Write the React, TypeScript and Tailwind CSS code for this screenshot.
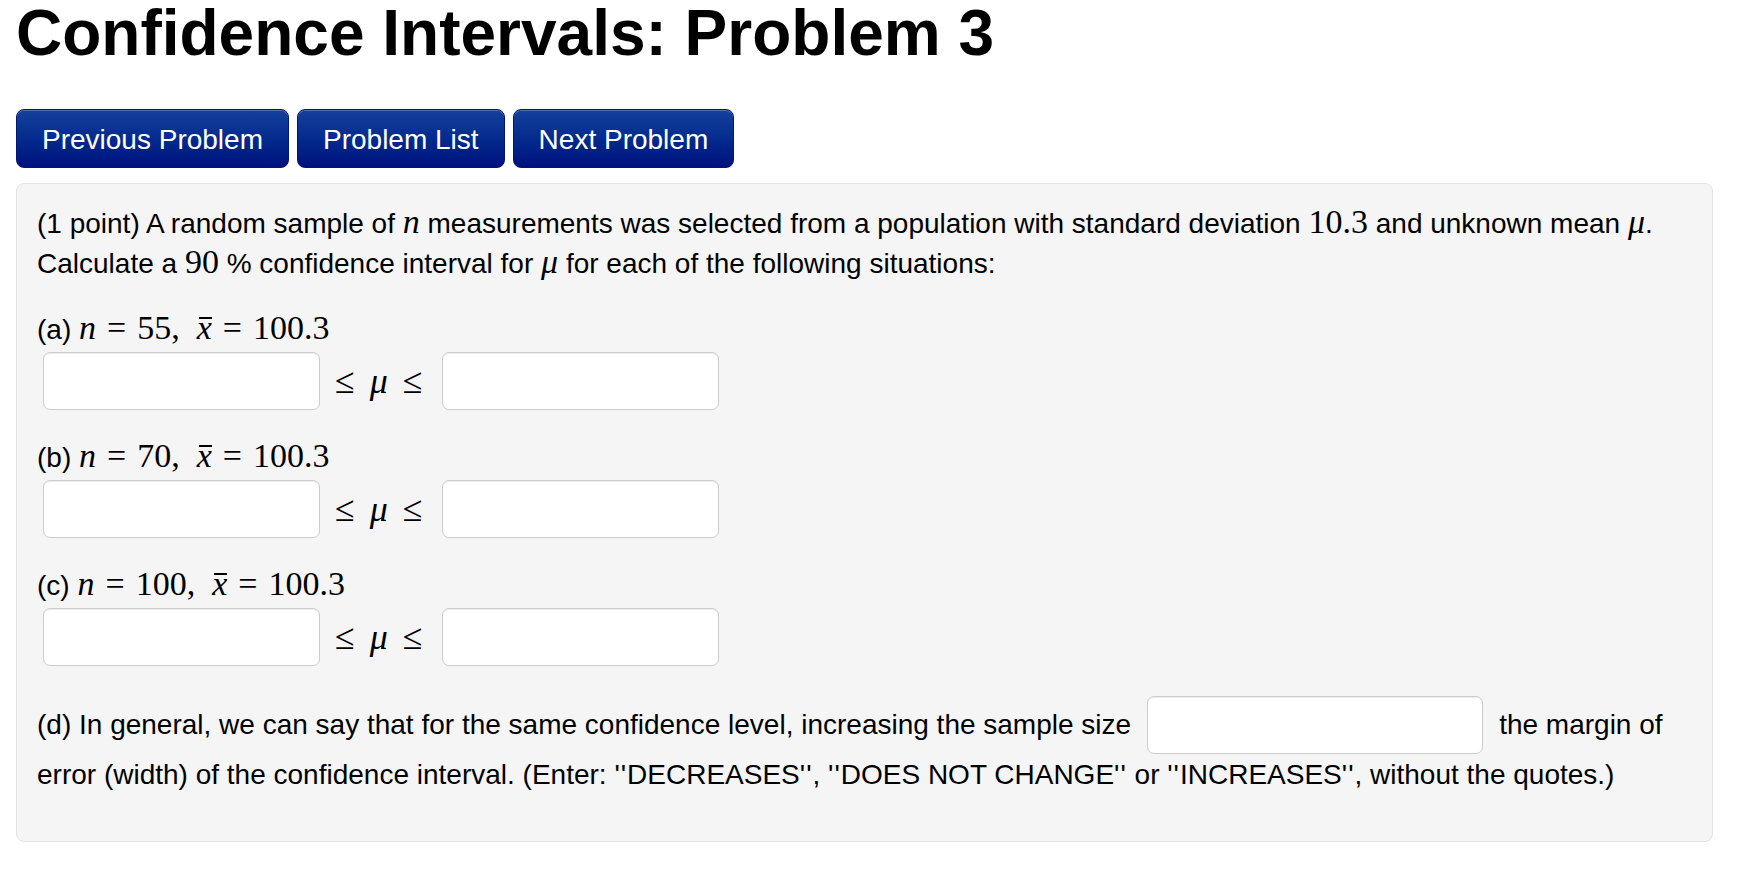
import type { ReactNode } from "react"

const sans = "font-['Liberation_Sans',Arial,sans-serif]"

function M({ children, italic }: { children: ReactNode; italic?: boolean }) {
  // inline math, set a bit larger in a serif face like MathJax output
  return (
    <span className={`font-['Liberation_Serif',serif] text-[34px] leading-none ${italic ? "italic" : ""}`}>
      {children}
    </span>
  )
}

function XBar() {
  return (
    <span className="relative inline-block leading-none">
      <span className="italic">x</span>
      <span className="absolute left-[2px] right-[0px] top-[6px] h-[2px] bg-black"></span>
    </span>
  )
}

// the problem text uses two single quotes, slightly apart
function Q() {
  return <span className="tracking-[1px]">''</span>
}

function AnswerBox({ width }: { width: string }) {
  return (
    <input
      type="text"
      className={`${width} h-[58px] rounded-[7px] border border-[#cccccc] bg-white shadow-[inset_0_1px_1px_rgba(0,0,0,0.075)] outline-none`}
    />
  )
}

function Part({ label, n }: { label: string; n: string }) {
  return (
    <div>
      <div className="leading-[40px]">
        ({label}){" "}
        <span className="font-['Liberation_Serif',serif] text-[34px] leading-none">
          <span className="italic">n</span>
          <span className="mx-[11px]">=</span>
          {n},
          <span className="ml-[17px]">
            <XBar />
          </span>
          <span className="mx-[11px]">=</span>
          100.3
        </span>
      </div>
      <div className="mt-[2px] flex items-center">
        <div className="ml-[6px]">
          <AnswerBox width="w-[277px]" />
        </div>
        <span className="ml-[15px] font-['Liberation_Serif',serif] text-[36px] leading-none">
          ≤<span className="mx-[15px] italic">μ</span>≤
        </span>
        <div className="ml-[19px]">
          <AnswerBox width="w-[277px]" />
        </div>
      </div>
    </div>
  )
}

export default function App() {
  const buttons = ["Previous Problem", "Problem List", "Next Problem"]

  return (
    <div className={`${sans} min-h-[872px] bg-white pl-[16px] pr-[25px] text-black`}>
      <h1 className="mt-[1px] text-[64px] font-bold leading-[64px]">Confidence Intervals: Problem 3</h1>

      {/* navigation */}
      <div className="mt-[44px] flex gap-[8px]">
        {buttons.map((b) => (
          <button
            key={b}
            className="h-[59px] rounded-[8px] border border-[#001673] bg-gradient-to-b from-[#15409c] to-[#000f7e] px-[25px] pt-[2px] text-[28px] leading-[40px] text-white shadow-[inset_0_1px_0_rgba(255,255,255,0.25)]"
          >
            {b}
          </button>
        ))}
      </div>

      {/* problem body */}
      <div className="mt-[15px] rounded-[8px] border border-[#e3e3e3] bg-[#f5f5f5] px-[20px] pb-[46px] pt-[20px] text-[28px]">
        <p className="leading-[40px]">
          (1 point) A random sample of <M italic>n</M> measurements was selected from a population with standard
          deviation <M>10.3</M> and unknown mean <M italic>μ</M>.
          <br />
          Calculate a <M>90</M> % confidence interval for <M italic>μ</M> for each of the following situations:
        </p>

        <div className="mt-[26px]">
          <Part label="a" n="55" />
        </div>
        <div className="mt-[28px]">
          <Part label="b" n="70" />
        </div>
        <div className="mt-[28px]">
          <Part label="c" n="100" />
        </div>

        <div className="mt-[30px] flex h-[58px] items-center gap-[16px] leading-[40px]">
          <span>(d) In general, we can say that for the same confidence level, increasing the sample size</span>
          <AnswerBox width="w-[336px]" />
          <span>the margin of</span>
        </div>
        <div className="mt-[1px] leading-[40px]">
          error (width) of the confidence interval. (Enter: <Q />DECREASES<Q />, <Q />DOES NOT CHANGE<Q /> or{" "}
          <Q />INCREASES<Q />, without the quotes.)
        </div>
      </div>
    </div>
  )
}
